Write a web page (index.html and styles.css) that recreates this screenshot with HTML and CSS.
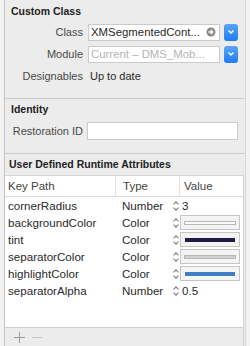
FILE: index.html
```html
<!DOCTYPE html>
<html lang="en">
<head>
    <meta charset="UTF-8">
    <title>Identity Inspector</title>
    <link rel="stylesheet" href="styles.css">
</head>
<body>
    <div class="inspector">
        <div class="section first">
            <div class="section-title">Custom Class</div>
            <div class="row">
                <span class="label">Class</span>
                <div class="field">
                    <span class="field-text">XMSegmentedCont...</span>
                    <svg class="go" width="10" height="10" viewBox="0 0 10 10">
                        <circle cx="5" cy="5" r="4.5" fill="#8a8a8a"/>
                        <path d="M2.5 5h4M4.8 3l2 2-2 2" stroke="#fff" stroke-width="1.3" fill="none"/>
                    </svg>
                </div>
                <button class="pop">
                    <svg width="8" height="6" viewBox="0 0 8 6"><path d="M1.5 1.5l2.5 2.5 2.5-2.5" stroke="#fff" stroke-width="1.4" fill="none"/></svg>
                </button>
            </div>
            <div class="row">
                <span class="label">Module</span>
                <div class="field">
                    <span class="field-text placeholder">Current – DMS_Mob...</span>
                </div>
                <button class="pop">
                    <svg width="8" height="6" viewBox="0 0 8 6"><path d="M1.5 1.5l2.5 2.5 2.5-2.5" stroke="#fff" stroke-width="1.4" fill="none"/></svg>
                </button>
            </div>
            <div class="row">
                <span class="label">Designables</span>
                <span class="static">Up to date</span>
            </div>
        </div>

        <div class="section">
            <div class="section-title">Identity</div>
            <div class="row tall">
                <span class="label">Restoration ID</span>
                <div class="field wide"></div>
            </div>
        </div>

        <div class="section last">
            <div class="section-title big">User Defined Runtime Attributes</div>
            <div class="table">
                <div class="thead">
                    <div class="col key">Key Path</div>
                    <div class="col type">Type</div>
                    <div class="col value">Value</div>
                </div>
                <div class="tbody">
                    <div class="tr">
                        <div class="col key">cornerRadius</div>
                        <div class="col type">Number<span class="stepper"></span></div>
                        <div class="col value">3</div>
                    </div>
                    <div class="tr">
                        <div class="col key">backgroundColor</div>
                        <div class="col type">Color<span class="stepper"></span></div>
                        <div class="col value"><span class="well"><span class="swatch light"></span></span></div>
                    </div>
                    <div class="tr">
                        <div class="col key">tint</div>
                        <div class="col type">Color<span class="stepper"></span></div>
                        <div class="col value"><span class="well"><span class="swatch navy"></span></span></div>
                    </div>
                    <div class="tr">
                        <div class="col key">separatorColor</div>
                        <div class="col type">Color<span class="stepper"></span></div>
                        <div class="col value"><span class="well"><span class="swatch grey"></span></span></div>
                    </div>
                    <div class="tr">
                        <div class="col key">highlightColor</div>
                        <div class="col type">Color<span class="stepper"></span></div>
                        <div class="col value"><span class="well"><span class="swatch blue"></span></span></div>
                    </div>
                    <div class="tr">
                        <div class="col key">separatorAlpha</div>
                        <div class="col type">Number<span class="stepper"></span></div>
                        <div class="col value">0.5</div>
                    </div>
                </div>
                <div class="tfoot">
                    <svg width="13" height="13" viewBox="0 0 13 13"><path d="M6.5 1v11M1 6.5h11" stroke="#9a9a9a" stroke-width="1"/></svg>
                    <svg width="12" height="13" viewBox="0 0 12 13"><path d="M1 6.5h10" stroke="#c6c6c6" stroke-width="1"/></svg>
                </div>
            </div>
        </div>
    </div>
</body>
</html>
```

FILE: styles.css
```css
body {
    margin: 0;
    background: #f2f2f2;
    font-family: "Liberation Sans", Arial, sans-serif;
    font-size: 11px;
    color: #2a2a2a;
}

.inspector {
    margin-left: 4px;
    width: 240px;
    height: 346px;
    background: #ececec;
    border-left: 1px solid #c4c4c4;
    border-right: 1px solid #d8d8d8;
    display: flex;
    flex-direction: column;
}

.section {
    border-bottom: 1px solid #cdcdcd;
    padding-bottom: 11px;
}

.section.first {
    padding-top: 1px;
}

.section.last {
    border-bottom: none;
    padding-bottom: 0;
    flex: 1;
    display: flex;
    flex-direction: column;
}

.section-title {
    height: 20px;
    line-height: 20px;
    padding-left: 6px;
    font-weight: bold;
    font-size: 10.5px;
    color: #222;
}

.section-title.big {
    height: 21px;
    line-height: 21px;
    padding-left: 4px;
}

.row {
    display: flex;
    align-items: center;
    height: 22px;
}

.row.tall {
    height: 23px;
}

.label {
    width: 78px;
    text-align: right;
    color: #4a4a4a;
    margin-right: 5px;
    flex-shrink: 0;
}

.static {
    padding-left: 2px;
}

.field {
    width: 125px;
    height: 15px;
    background: #fff;
    border: 1px solid #cbcbcb;
    display: flex;
    align-items: center;
    justify-content: space-between;
    padding: 0 3px 0 2px;
    font-size: 11.4px;
}

.field.wide {
    width: 144px;
    margin-left: -1px;
    height: 16px;
}

.field-text {
    white-space: nowrap;
    overflow: hidden;
}

.placeholder {
    color: #b4b4b4;
}

.pop {
    width: 14px;
    height: 17px;
    margin-left: 4px;
    padding: 0;
    border: none;
    border-radius: 3px;
    background: linear-gradient(#5aa4f7, #1f7cf0);
    display: flex;
    align-items: center;
    justify-content: center;
}

.table {
    flex: 1;
    display: flex;
    flex-direction: column;
    margin-right: 1px;
    border-right: 1px solid #d4d4d4;
}

.thead {
    display: flex;
    height: 20px;
    line-height: 20px;
    background: #fff;
    border-top: 1px solid #d6d6d6;
    border-bottom: 1px solid #dadada;
    font-size: 11.5px;
    color: #444;
}

.thead .col {
    border-right: 1px solid #e2e2e2;
}

.thead .col.value {
    border-right: none;
}

.tbody {
    flex: 1;
    background: #fff;
    border-bottom: 1px solid #cfcfcf;
    font-size: 11.6px;
}

.tr {
    display: flex;
    height: 17px;
    line-height: 17px;
    align-items: center;
}

.col {
    white-space: nowrap;
}

.col.key {
    width: 107px;
    padding-left: 3px;
}

.col.type {
    width: 56px;
    padding-left: 7px;
    display: flex;
    align-items: center;
}

.col.value {
    flex: 1;
    padding-left: 4px;
}

.stepper {
    width: 6px;
    height: 10px;
    margin-left: auto;
    margin-right: -1px;
    position: relative;
}

.stepper::before,
.stepper::after {
    content: "";
    position: absolute;
    left: 1px;
    width: 3px;
    height: 3px;
    border-left: 1px solid #777;
    border-top: 1px solid #777;
}

.stepper::before {
    top: 1px;
    transform: rotate(45deg);
}

.stepper::after {
    bottom: 1px;
    transform: rotate(225deg);
}

.well {
    display: flex;
    align-items: center;
    justify-content: center;
    width: 58px;
    height: 13px;
    margin-left: -2px;
    background: #f4f4f4;
    border: 1px solid #c6c6c6;
}

.swatch {
    width: 50px;
    height: 3px;
}

.swatch.light {
    background: #fafafa;
    border: 1px solid #b8b8b8;
    height: 2px;
}

.swatch.navy {
    background: #1d1b48;
    height: 4px;
}

.swatch.grey {
    background: #d2d2d2;
    border: 1px solid #b8b8b8;
    height: 2px;
}

.swatch.blue {
    background: #3e7fc6;
    height: 4px;
}

.tfoot {
    height: 18px;
    display: flex;
    align-items: center;
    padding-left: 8px;
    gap: 5px;
}
```
